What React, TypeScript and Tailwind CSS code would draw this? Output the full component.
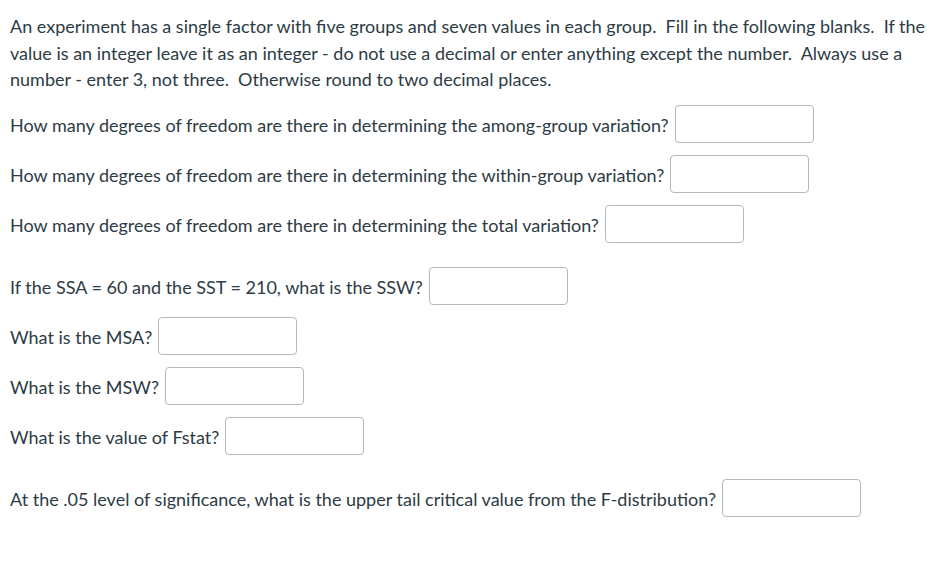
import React from "react";

type Question = { id: string; label: string; spaced?: boolean };

const questions: Question[] = [
  { id: "df-among", label: "How many degrees of freedom are there in determining the among-group variation?" },
  { id: "df-within", label: "How many degrees of freedom are there in determining the within-group variation?" },
  { id: "df-total", label: "How many degrees of freedom are there in determining the total variation?" },
  { id: "ssw", label: "If the SSA = 60 and the SST = 210, what is the SSW?", spaced: true },
  { id: "msa", label: "What is the MSA?" },
  { id: "msw", label: "What is the MSW?" },
  { id: "fstat", label: "What is the value of Fstat?" },
  {
    id: "fcrit",
    label: "At the .05 level of significance, what is the upper tail critical value from the F-distribution?",
    spaced: true,
  },
];

function BlankRow({ q }: { q: Question }) {
  return (
    <div className={`mb-[12px] flex h-[38px] items-center gap-[6px] ${q.spaced ? "mt-[24px]" : ""}`}>
      <label htmlFor={q.id} className="whitespace-nowrap pt-[4px]">
        {q.label}
      </label>
      <input
        id={q.id}
        type="text"
        className="h-[38px] w-[139px] rounded-[4px] border border-[#b4b9bd] bg-white px-2 outline-none"
      />
    </div>
  );
}

export default function App() {
  return (
    <div className="min-h-[576px] bg-white px-[10px] pt-[13px] font-['Lato','Liberation_Sans',sans-serif] text-[18px] leading-[26.5px] text-[#2d3b45]">
      <p className="mb-[12px] whitespace-pre-wrap">
        {"An experiment has a single factor with five groups and seven values in each group.  Fill in the following blanks.  If the value is an integer leave it as an integer - do not use a decimal or enter anything except the number.  Always use a number - enter 3, not three.  Otherwise round to two decimal places."}
      </p>
      {questions.map((q) => (
        <BlankRow key={q.id} q={q} />
      ))}
    </div>
  );
}
